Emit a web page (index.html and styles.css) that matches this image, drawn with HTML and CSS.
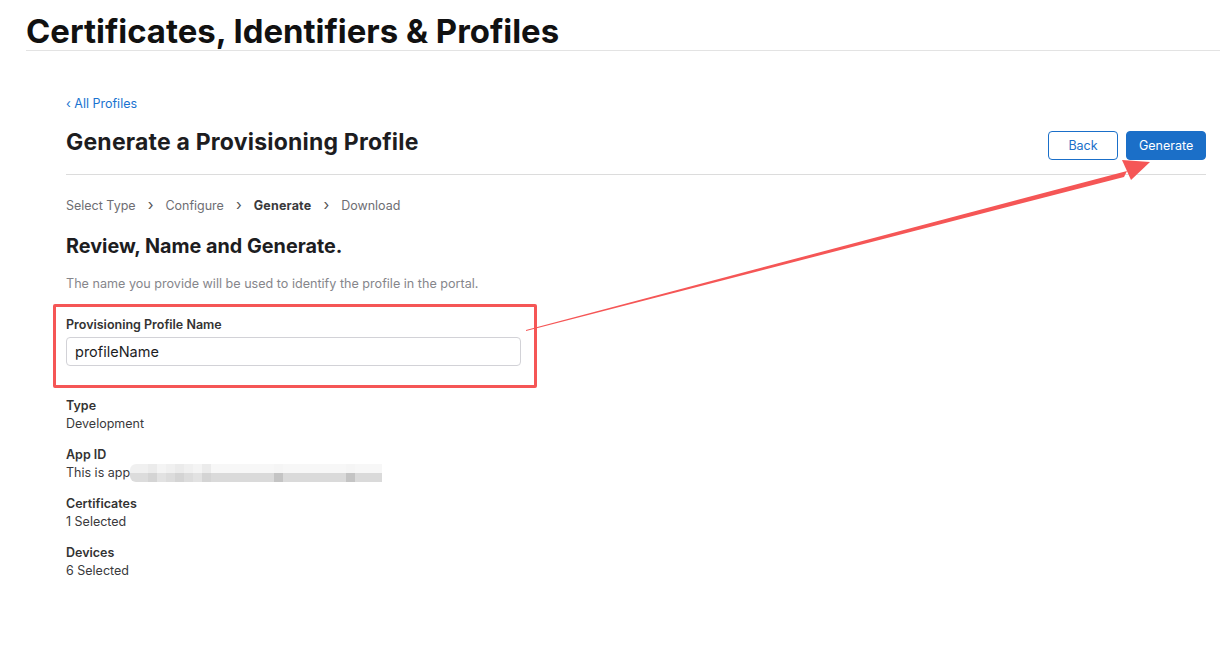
FILE: index.html
```html
<!DOCTYPE html>
<html lang="en">
<head>
<meta charset="utf-8">
<title>Certificates, Identifiers &amp; Profiles</title>
<link rel="stylesheet" href="styles.css">
</head>
<body>
<header class="top">
  <h1 class="top-title">Certificates, Identifiers &amp; Profiles</h1>
</header>
<main class="content">
  <a class="back-link" href="#">‹ All Profiles</a>
  <div class="title-row">
    <h2 class="page-title">Generate a Provisioning Profile</h2>
    <div class="actions">
      <button class="btn btn-outline">Back</button>
      <button class="btn btn-primary">Generate</button>
    </div>
  </div>
  <nav class="steps">
    <span class="step">Select Type</span>
    <span class="chev">›</span>
    <span class="step">Configure</span>
    <span class="chev">›</span>
    <span class="step current">Generate</span>
    <span class="chev">›</span>
    <span class="step">Download</span>
  </nav>
  <h3 class="section-title">Review, Name and Generate.</h3>
  <p class="desc">The name you provide will be used to identify the profile in the portal.</p>
  <div class="field">
    <label class="field-label">Provisioning Profile Name</label>
    <div class="input">profileName</div>
  </div>
  <dl class="details">
    <div class="item"><dt>Type</dt><dd>Development</dd></div>
    <div class="item"><dt>App ID</dt><dd>This is app<span class="blur"><i></i><i></i><i></i><i></i><i></i><i></i><i></i><i></i><i></i><i></i><i></i><i></i><i></i><i></i><i></i><i></i><i></i><i></i><i></i><i></i><i></i><i></i><i></i><i></i><i></i><i></i><i></i><i></i></span></dd></div>
    <div class="item"><dt>Certificates</dt><dd>1 Selected</dd></div>
    <div class="item"><dt>Devices</dt><dd>6 Selected</dd></div>
  </dl>
</main>
<svg class="arrow" width="1220" height="649" viewBox="0 0 1220 649">
  <polygon points="526,330 1127,171 1124,177 526,331" fill="#f55656"/>
  <polygon points="1150,162 1122,160 1131,180" fill="#f55656"/>
</svg>
</body>
</html>
```

FILE: styles.css
```css
* { box-sizing: border-box; }
html, body { margin: 0; padding: 0; background: #fff; }
body {
  font-family: Inter, "Noto Sans", "Liberation Sans", sans-serif;
  color: #1d1d1f;
  position: relative;
  width: 1220px;
  height: 649px;
  overflow: hidden;
}
.top {
  margin-left: 26px;
  height: 51px;
  border-bottom: 1px solid #e3e3e3;
}
.top-title {
  margin: 0;
  padding-top: 12px;
  font-size: 32.9px;
  line-height: 38px;
  font-weight: 700;
  letter-spacing: 0;
  color: #111;
}
.content {
  padding: 44px 14px 0 66px;
}
.back-link {
  display: block;
  font-size: 12.5px;
  line-height: 18px;
  color: #1a73d0;
  text-decoration: none;
}
.title-row {
  display: flex;
  align-items: center;
  justify-content: space-between;
  height: 62px;
  padding-bottom: 4px;
  border-bottom: 1px solid #dcdcdc;
}
.page-title {
  margin: 0;
  font-size: 23px;
  font-weight: 700;
  letter-spacing: 0.2px;
  color: #1d1d1f;
}
.actions {
  display: flex;
  gap: 8px;
  margin-top: 7px;
}
.btn {
  font-family: inherit;
  font-size: 12.5px;
  height: 29px;
  border-radius: 4px;
  padding: 0 12px;
  cursor: pointer;
}
.btn-outline {
  width: 70px;
  background: #fff;
  color: #1a6fc9;
  border: 1px solid #1a6fc9;
}
.btn-primary {
  width: 80px;
  background: #1b6fc8;
  color: #fff;
  border: 1px solid #1b6fc8;
}
.steps {
  display: flex;
  align-items: center;
  margin-top: 22px;
  font-size: 12.5px;
  line-height: 18px;
  color: #6e6e73;
}
.chev {
  font-size: 15px;
  margin: -3px 12px 0 12px;
  color: #555;
}
.step.current { font-weight: 700; color: #3a3a3c; letter-spacing: 0.2px; }
.section-title {
  margin: 19px 0 0;
  font-size: 19.8px;
  line-height: 24px;
  font-weight: 700;
  color: #1d1d1f;
}
.desc {
  margin: 17px 0 0;
  font-size: 12.6px;
  line-height: 18px;
  color: #86868b;
}
.field {
  position: relative;
  width: 455px;
  margin-top: 23px;
}
.field::after {
  content: "";
  position: absolute;
  left: -13px;
  top: -12px;
  right: -16px;
  bottom: -22px;
  border: 3px solid #f55656;
  border-radius: 2px;
}
.field-label {
  display: block;
  font-size: 12.5px;
  line-height: 18px;
  font-weight: 600;
  color: #333;
}
.input {
  margin-top: 3px;
  height: 29px;
  border: 1px solid #d2d2d7;
  border-radius: 4px;
  padding: 0 8px;
  font-size: 14.5px;
  line-height: 27px;
  color: #1d1d1f;
}
.details {
  margin: 31px 0 0;
}
.item { margin-bottom: 13px; }
.item dt {
  font-size: 12.5px;
  line-height: 18px;
  font-weight: 600;
  color: #333;
}
.item dd {
  margin: 0;
  font-size: 12.5px;
  line-height: 18px;
  color: #3a3a3c;
}
.blur {
  display: inline-flex;
  vertical-align: -5px;
  height: 18px;
  border-radius: 6px 0 0 6px;
  overflow: hidden;
}
.blur i {
  display: block;
  width: 9px;
  height: 18px;
  background: linear-gradient(#f0f0f0 0 50%, #dcdcdc 50% 100%);
}
.blur i:nth-child(3n) { background: linear-gradient(#ebebeb 0 50%, #d4d4d4 50% 100%); }
.blur i:nth-child(4n) { background: linear-gradient(#f4f4f4 0 50%, #e2e2e2 50% 100%); }
.blur i:nth-child(n+10) { background: linear-gradient(#f7f7f7 0 50%, #dadada 50% 100%); }
.blur i:nth-child(17), .blur i:nth-child(25) { background: linear-gradient(#f5f5f5 0 50%, #c4c4c4 50% 100%); }
.arrow {
  position: absolute;
  left: 0;
  top: 0;
  pointer-events: none;
}
```
